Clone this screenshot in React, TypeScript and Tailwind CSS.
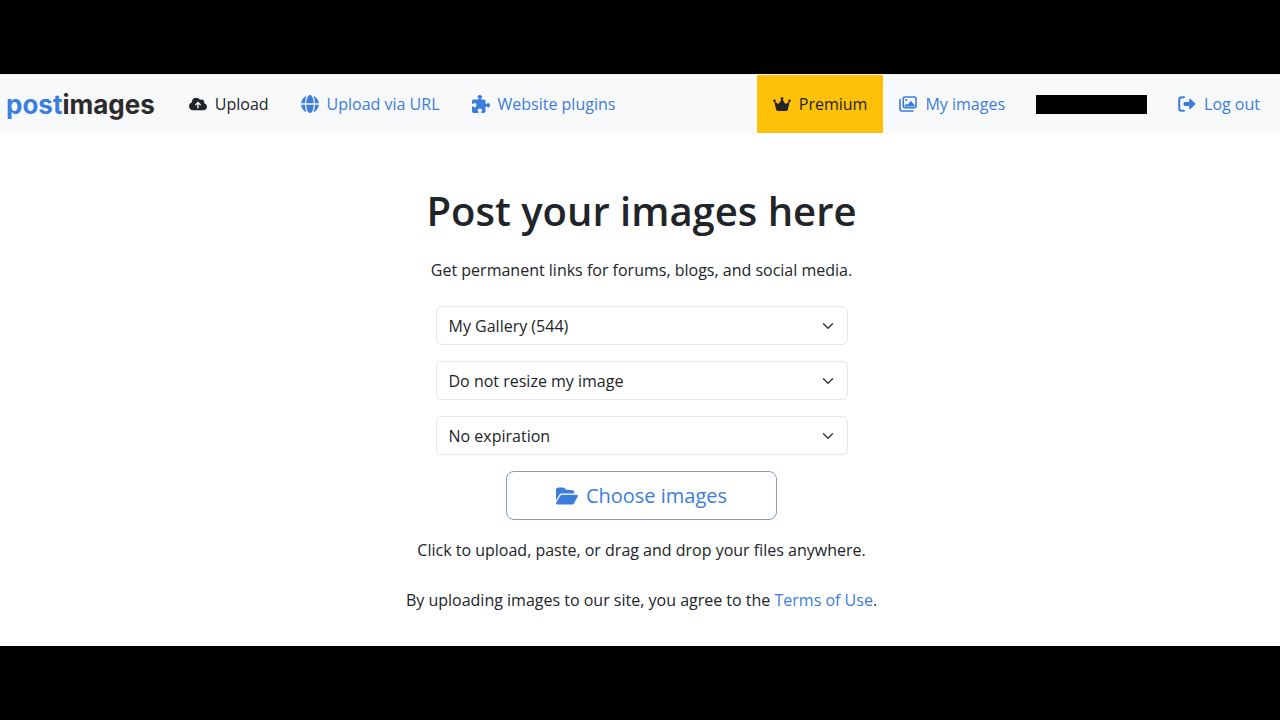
import React from "react";
import { FaCloudArrowUp, FaPuzzlePiece, FaFolderOpen } from "react-icons/fa6";

function GlobeIcon() {
  return (
    <svg viewBox="0 0 18 18" className="size-[18px] shrink-0" fill="currentColor" aria-hidden="true">
      <path d="M5.6 0.7C2.7 1.9.5 4.9.1 8.3h4c.1-3 .6-5.7 1.5-7.6zM7.6.4C6.300 1.500 5.400 4.600 5.300 8.300h7.400C12.600 4.600 11.700 1.500 10.400.4 9.500-.1 8.500-.1 7.600.4zM12.400.7c.9 1.900 1.400 4.600 1.500 7.600h4C17.500 4.900 15.300 1.900 12.400.7zM.1 9.700c.4 3.400 2.600 6.400 5.500 7.600-.9-1.900-1.400-4.600-1.500-7.600zM5.300 9.700c.1 3.700 1 6.800 2.300 7.900.9.500 1.900.5 2.800 0 1.300-1.100 2.200-4.200 2.300-7.900zM13.900 9.700c-.1 3-.6 5.700-1.500 7.600 2.900-1.200 5.100-4.200 5.500-7.600z" />
    </svg>
  );
}

function CrownIcon() {
  return (
    <svg viewBox="0 0 18 15" className="h-[15px] w-[18px] shrink-0" fill="currentColor" aria-hidden="true">
      <circle cx="1.500" cy="3.700" r="1.300" />
      <circle cx="16.500" cy="3.700" r="1.300" />
      <circle cx="9" cy="1.600" r="1.400" />
      <path d="M1.300 4.500 5.600 7 8.500 2.500h1L12.400 7l4.300-2.500-1.800 8.100c-.2.900-.8 1.400-1.700 1.400H4.800c-.9 0-1.500-.5-1.700-1.400z" />
    </svg>
  );
}

function ImagesIcon() {
  return (
    <svg viewBox="0 0 18 16" className="h-4 w-[18px] shrink-0" fill="none" stroke="currentColor" strokeWidth="1.600" aria-hidden="true">
      <rect x="4.300" y="1" width="12.700" height="10.800" rx="1.500" />
      <path d="M1 3.500v9.200c0 1.400.9 2.300 2.300 2.300H14" strokeLinecap="round" />
      <circle cx="7.300" cy="4" r="1.100" fill="currentColor" stroke="none" />
      <path d="M5.500 10.500V9.500l2-2 1.200 1.200 3.200-4 3.800 4.500v1.300z" fill="currentColor" stroke="none" />
    </svg>
  );
}

function LogoutIcon() {
  return (
    <svg viewBox="0 0 18 16" className="h-4 w-[18px] shrink-0" fill="none" stroke="currentColor" strokeWidth="2" aria-hidden="true">
      <path d="M6 1.200H3.800C2.200 1.200 1.200 2.200 1.200 3.800v8.400c0 1.600 1 2.600 2.600 2.600H6" strokeLinecap="round" />
      <path d="M6.500 6h4.700V3.200c0-.7.500-.9 1-.5l5 4.600c.4.400.4.900 0 1.300l-5 4.700c-.5.400-1 .2-1-.5V10H6.500c-.6 0-.9-.3-.9-.9V6.900c0-.6.300-.9.900-.9z" fill="currentColor" stroke="none" />
    </svg>
  );
}

function SelectField({ label, options }: { label: string; options: string[] }) {
  return (
    <div className="grid items-center">
      <select
        aria-label={label}
        className="col-start-1 row-start-1 h-[39px] w-full appearance-none rounded-md border border-[#e4e6e9] bg-white px-3 text-base text-[#212529]"
      >
        {options.map((o) => (
          <option key={o}>{o}</option>
        ))}
      </select>
      <svg viewBox="0 0 16 16" className="pointer-events-none col-start-1 row-start-1 mr-3.5 size-3 justify-self-end" fill="none" stroke="#343a40" strokeWidth="2" strokeLinecap="round" strokeLinejoin="round" aria-hidden="true">
        <path d="m2 5 6 6 6-6" />
      </svg>
    </div>
  );
}

const navLink = "flex items-center gap-2 px-4";

export default function App() {
  return (
    <div className="flex min-h-screen flex-col bg-black pt-[74px] font-['Open_Sans','Noto_Sans',sans-serif] text-base text-[#212529]">
      <header className="flex h-[59px] items-stretch border-t border-[#eceef0] bg-[#f8f9fa] pl-1.5 pr-1">
        <a href="#home" className="flex items-center pr-[18px] font-['Inter',sans-serif] text-[26px] font-bold text-[#2b2b2b]">
          <span className="text-[#3b7fdd]">post</span>images
        </a>
        <nav className="flex flex-1 items-stretch text-[#3b7ddd]">
          <a href="#upload" className={`${navLink} text-[#212529]`}><FaCloudArrowUp className="size-[18px]" />Upload</a>
          <a href="#url" className={navLink}><GlobeIcon />Upload via URL</a>
          <a href="#plugins" className={navLink}><FaPuzzlePiece className="size-[18px]" />Website plugins</a>
          <a href="#premium" className={`${navLink} ml-auto bg-[#ffc107] text-[#212529]`}><CrownIcon />Premium</a>
          <a href="#images" className={navLink}><ImagesIcon />My images</a>
          <a href="#account" aria-label="Account" className="flex items-center px-[15px]"><span className="h-[19px] w-[111px] bg-black" /></a>
          <a href="#logout" className={navLink}><LogoutIcon />Log out</a>
        </nav>
      </header>
      <main className="flex flex-col items-center bg-white pb-[34px] pl-[3px] pt-[52px] text-center">
        <h1 className="text-[40px] font-semibold leading-[52px]">Post your images here</h1>
        <p className="mt-[21px] leading-6">Get permanent links for forums, blogs, and social media.</p>
        <form className="mt-6 flex w-full max-w-[412px] flex-col gap-4">
          <SelectField label="Gallery" options={["My Gallery (544)"]} />
          <SelectField label="Image size" options={["Do not resize my image"]} />
          <SelectField label="Expiration" options={["No expiration"]} />
          <button type="button" className="flex h-[49px] w-[271px] items-center justify-center gap-2 self-center rounded-lg border border-[#7f9fc0] text-xl text-[#3b7ddd]">
            <FaFolderOpen className="size-[22px]" />Choose images
          </button>
        </form>
        <p className="mt-[18px] leading-6">Click to upload, paste, or drag and drop your files anywhere.</p>
        <p className="mt-[26px] leading-6">By uploading images to our site, you agree to the <a href="#terms" className="text-[#3b7ddd]">Terms of Use</a>.</p>
      </main>
    </div>
  );
}
